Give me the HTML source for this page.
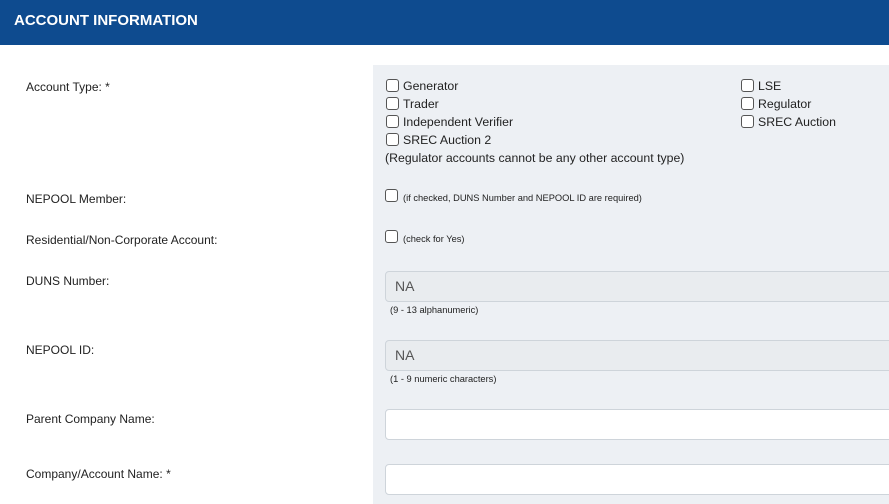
<!DOCTYPE html>
<html><head><style>
body{margin:0;width:889px;height:504px;overflow:hidden;background:#fff;font-family:"Liberation Sans",Arial,sans-serif;color:#222;position:relative}
.hd{position:absolute;left:0;top:0;width:889px;height:45px;background:#0e4b8f;color:#fff;font-weight:bold;font-size:15px;line-height:41px;padding-left:14px;box-sizing:border-box}
.panel{position:absolute;left:373px;top:65px;width:516px;height:439px;background:#edf0f4}
.l{position:absolute;left:26px;font-size:12px}
.t{position:absolute;font-size:12.3px;white-space:nowrap}
.s{position:absolute;font-size:9.3px;white-space:nowrap}
.cb{position:absolute;width:11px;height:11px;border:1px solid #555;border-radius:3px;background:#fff}
.in{position:absolute;left:385px;width:520px;height:29px;border:1px solid #ced4da;border-radius:4px;background:#fff;font-size:14px;color:#555;line-height:29px;padding-left:9px;box-sizing:content-box}
.dis{background:#e9ecef}
</style></head><body>
<div class="hd">ACCOUNT INFORMATION</div>
<div class="panel"></div>
<div class="l" style="top:80px">Account Type: *</div>
<div class="l" style="top:192px">NEPOOL Member:</div>
<div class="l" style="top:233px">Residential/Non-Corporate Account:</div>
<div class="l" style="top:274px">DUNS Number:</div>
<div class="l" style="top:343px">NEPOOL ID:</div>
<div class="l" style="top:412px">Parent Company Name:</div>
<div class="l" style="top:467px">Company/Account Name: *</div>

<div class="cb" style="left:386px;top:79px"></div><div class="t" style="left:403px;top:79px">Generator</div>
<div class="cb" style="left:386px;top:97px"></div><div class="t" style="left:403px;top:97px">Trader</div>
<div class="cb" style="left:386px;top:115px"></div><div class="t" style="left:403px;top:115px">Independent Verifier</div>
<div class="cb" style="left:386px;top:133px"></div><div class="t" style="left:403px;top:133px">SREC Auction 2</div>
<div class="t" style="left:385px;top:151px">(Regulator accounts cannot be any other account type)</div>
<div class="cb" style="left:741px;top:79px"></div><div class="t" style="left:758px;top:79px">LSE</div>
<div class="cb" style="left:741px;top:97px"></div><div class="t" style="left:758px;top:97px">Regulator</div>
<div class="cb" style="left:741px;top:115px"></div><div class="t" style="left:758px;top:115px">SREC Auction</div>

<div class="cb" style="left:385px;top:189px"></div><div class="s" style="left:403px;top:193px">(if checked, DUNS Number and NEPOOL ID are required)</div>
<div class="cb" style="left:385px;top:230px"></div><div class="s" style="left:403px;top:234px">(check for Yes)</div>

<div class="in dis" style="top:271px">NA</div>
<div class="s" style="left:390px;top:305px">(9 - 13 alphanumeric)</div>
<div class="in dis" style="top:340px">NA</div>
<div class="s" style="left:390px;top:374px">(1 - 9 numeric characters)</div>
<div class="in" style="top:409px"></div>
<div class="in" style="top:464px"></div>
</body></html>
